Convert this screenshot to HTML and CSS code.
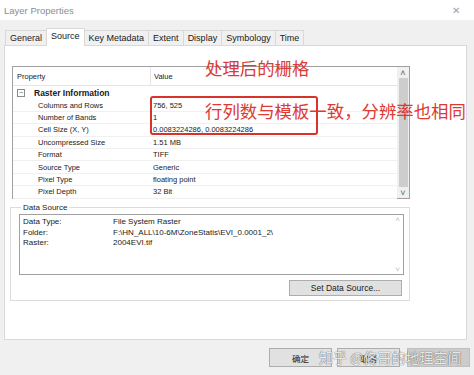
FILE: index.html
```html
<!DOCTYPE html>
<html lang="en">
<head>
    <meta charset="UTF-8">
    <meta name="viewport" content="width=device-width, initial-scale=1.0">
    <title>Layer Properties</title>
    <link rel="stylesheet" href="styles.css">
</head>
<body>
    <div class="window">
        <div class="titlebar">
            <span class="title">Layer Properties</span>
            <span class="close">&#x2715;</span>
        </div>

        <div class="tabs">
            <div class="tab">General</div>
            <div class="tab active">Source</div>
            <div class="tab">Key Metadata</div>
            <div class="tab">Extent</div>
            <div class="tab">Display</div>
            <div class="tab">Symbology</div>
            <div class="tab">Time</div>
        </div>

        <div class="panel">
            <div class="proplist">
                <div class="proplist-body">
                    <div class="prop-head">
                        <div class="col-name">Property</div>
                        <div class="col-value">Value</div>
                    </div>
                    <div class="prop-group">
                        <span class="toggle">&minus;</span>
                        <span>Raster Information</span>
                    </div>
                    <div class="prop-row"><div class="col-name">Columns and Rows</div><div class="col-value">756, 525</div></div>
                    <div class="prop-row"><div class="col-name">Number of Bands</div><div class="col-value">1</div></div>
                    <div class="prop-row"><div class="col-name">Cell Size (X, Y)</div><div class="col-value">0.0083224286, 0.0083224286</div></div>
                    <div class="prop-row"><div class="col-name">Uncompressed Size</div><div class="col-value">1.51 MB</div></div>
                    <div class="prop-row"><div class="col-name">Format</div><div class="col-value">TIFF</div></div>
                    <div class="prop-row"><div class="col-name">Source Type</div><div class="col-value">Generic</div></div>
                    <div class="prop-row"><div class="col-name">Pixel Type</div><div class="col-value">floating point</div></div>
                    <div class="prop-row"><div class="col-name">Pixel Depth</div><div class="col-value">32 Bit</div></div>
                </div>
                <div class="scrollbar">
                    <span class="arrow">&#x2c4;</span>
                    <span class="thumb"></span>
                    <span class="arrow">&#x2c5;</span>
                </div>
            </div>

            <fieldset class="datasource">
                <legend>Data Source</legend>
                <div class="source-box">
                    <div class="source-text">
                        <div class="source-line"><span class="source-key">Data Type:</span><span>File System Raster</span></div>
                        <div class="source-line"><span class="source-key">Folder:</span><span>F:\HN_ALL\10-6M\ZoneStatis\EVI_0.0001_2\</span></div>
                        <div class="source-line"><span class="source-key">Raster:</span><span>2004EVI.tif</span></div>
                    </div>
                    <div class="source-scroll">
                        <span>&#x2c4;</span>
                        <span>&#x2c5;</span>
                    </div>
                </div>
                <div class="source-actions">
                    <button class="btn set-source">Set Data Source...</button>
                </div>
            </fieldset>
        </div>

        <div class="footer">
            <button class="btn">确定</button>
            <button class="btn">取消</button>
            <button class="btn disabled"></button>
        </div>

        <!-- annotations drawn on top of the screenshot -->
        <div class="note-box"></div>
        <div class="note note-top">处理后的栅格</div>
        <div class="note note-mid">行列数与模板一致，分辨率也相同</div>
        <div class="watermark">知乎 @佟哥的地理空间</div>
    </div>
</body>
</html>
```

FILE: styles.css
```css
body {
    margin: 0;
    padding: 0;
    background-color: #f0f0f0;
    font-family: "Liberation Sans", Arial, sans-serif;
    color: #1a1a1a;
}
.window {
    position: relative;
    width: 474px;
    height: 375px;
    overflow: hidden;
    background-color: #f0f0f0;
}
.titlebar {
    height: 20px;
    background-color: #fff;
    display: flex;
    align-items: center;
    justify-content: space-between;
    padding: 0 14px 0 4px;
}
.title {
    font-size: 9.5px;
    color: #8c8c8c;
}
.close {
    font-size: 10px;
    color: #a0a0a0;
}

/* tabs */
.tabs {
    display: flex;
    align-items: flex-end;
    height: 17px;
    margin-top: 8px;
    padding-left: 5px;
}
.tab {
    height: 14px;
    padding: 0 4px;
    font-size: 9px;
    line-height: 14px;
    border: 1px solid #d9d9d9;
    border-bottom: none;
    margin-right: -1px;
    background-color: #f0f0f0;
}
.tab.active {
    height: 17px;
    line-height: 15px;
    background-color: #fff;
    position: relative;
    z-index: 1;
    margin-bottom: -1px;
}

/* main panel */
.panel {
    width: 463px;
    height: 295px;
    margin-left: 4px;
    box-sizing: border-box;
    background-color: #fff;
    border: 1px solid #d9d9d9;
    padding: 20px 0 0 7px;
}
.proplist {
    display: flex;
    width: 398px;
    height: 133px;
    box-sizing: border-box;
    border: 1px solid #a0a0a0;
    font-size: 7.5px;
}
.proplist-body {
    flex: 1;
}
.prop-head {
    display: flex;
    height: 18px;
    align-items: center;
    border-bottom: 1px solid #e5e5e5;
}
.prop-head .col-name {
    padding-left: 4px;
    width: 133px;
    height: 100%;
    display: flex;
    align-items: center;
    border-right: 1px solid #e5e5e5;
}
.prop-head .col-value {
    padding-left: 3px;
}
.prop-group {
    display: flex;
    align-items: center;
    height: 12.4px;
    margin-top: 1px;
    font-weight: bold;
    font-size: 8.5px;
}
.toggle {
    width: 6px;
    height: 6px;
    border: 1px solid #8a8a8a;
    font-size: 7px;
    line-height: 6px;
    text-align: center;
    font-weight: normal;
    color: #555;
    margin: 0 9px 0 4px;
}
.prop-row {
    display: flex;
    height: 12.4px;
    align-items: center;
    border-bottom: 1px solid #f0f0f0;
    box-sizing: border-box;
}
.prop-row .col-name {
    width: 137px;
    padding-left: 25px;
    box-sizing: border-box;
}
.prop-row .col-value {
    padding-left: 3px;
}
.scrollbar {
    width: 12px;
    display: flex;
    flex-direction: column;
    align-items: center;
    background-color: #f0f0f0;
    color: #606060;
    font-size: 9px;
}
.arrow {
    height: 11px;
    line-height: 13px;
}
.thumb {
    flex: 1;
    width: 9px;
    background-color: #cdcdcd;
}

/* data source group */
.datasource {
    width: 400px;
    height: 98px;
    box-sizing: border-box;
    margin: 4px 0 0 -2px;
    padding: 2px 5px 0 8px;
    border: 1px solid #dcdcdc;
    font-size: 8px;
}
.datasource legend {
    padding: 0 2px;
    margin-left: 2px;
    font-size: 8px;
}
.source-box {
    display: flex;
    height: 61px;
    width: 385px;
    box-sizing: border-box;
    border: 1px solid #a0a0a0;
}
.source-text {
    flex: 1;
    padding: 2px 0 0 3px;
}
.source-line {
    display: flex;
    height: 10.5px;
    line-height: 10.5px;
}
.source-key {
    width: 90px;
}
.source-scroll {
    width: 11px;
    display: flex;
    flex-direction: column;
    justify-content: space-between;
    align-items: center;
    color: #c0c0c0;
    font-size: 8px;
}
.source-actions {
    display: flex;
    justify-content: flex-end;
    width: 385px;
    margin-top: 5px;
}
.btn {
    font-family: "Liberation Sans", "Noto Sans CJK SC", sans-serif;
    font-size: 8.5px;
    color: #1a1a1a;
    background-color: #e1e1e1;
    border: 1px solid #adadad;
    padding: 0;
}
.set-source {
    width: 113px;
    height: 16px;
    margin-right: 2px;
}

/* bottom buttons */
.footer {
    display: flex;
    gap: 5px;
    padding: 8px 0 0 269px;
}
.footer .btn {
    width: 63px;
    height: 19px;
}
.footer .btn.disabled {
    margin-left: 2px;
    background-color: #cccccc;
    border-color: #bfbfbf;
}

/* red annotations */
.note-box {
    position: absolute;
    left: 150px;
    top: 96px;
    width: 168px;
    height: 39px;
    box-sizing: border-box;
    border: 2px solid #d8322c;
    border-radius: 3px;
}
.note {
    position: absolute;
    left: 205px;
    font-family: "Noto Sans CJK SC", sans-serif;
    font-size: 17.4px;
    line-height: 18px;
    color: #dc3a33;
}
.note-top {
    top: 59px;
}
.note-mid {
    top: 102px;
}
.watermark {
    position: absolute;
    left: 319px;
    top: 349px;
    font-family: "Noto Sans CJK SC", sans-serif;
    font-size: 14px;
    line-height: 17px;
    color: rgba(255, 255, 255, 0.9);
    text-shadow: 0 0 1px rgba(0, 0, 0, 0.55), 0 0 1px rgba(0, 0, 0, 0.4);
}
```
